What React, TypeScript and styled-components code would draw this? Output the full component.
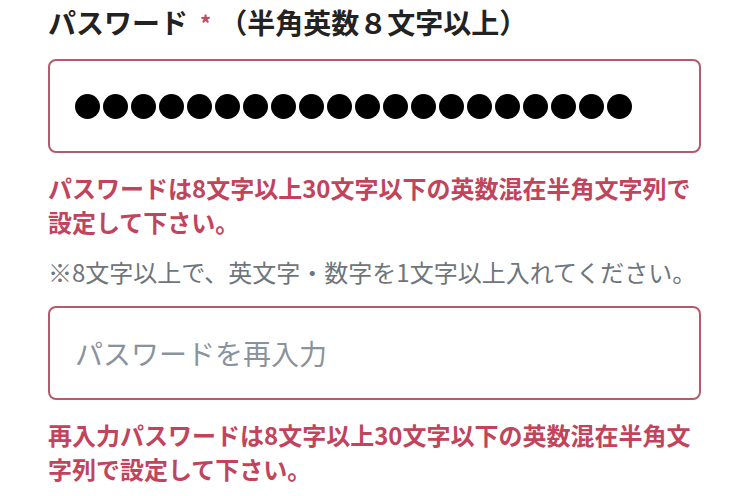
import styled, { createGlobalStyle } from "styled-components";

const GlobalStyle = createGlobalStyle`
  html, body {
    margin: 0;
    padding: 0;
    background: #ffffff;
  }
  body {
    font-family: "Noto Sans CJK JP", "Noto Sans", sans-serif;
  }
`;

function App() {
  return (
    <>
      <GlobalStyle />
      <Form>
        <Label>
          パスワード<Required>*</Required>
          <Note>（半角英数８文字以上）</Note>
        </Label>
        <InputBox>
          <Masked aria-label="パスワード">
            {Array.from({ length: 20 }).map((_, i) => (
              <Dot key={i} />
            ))}
          </Masked>
        </InputBox>
        <ErrorText>
          パスワードは8文字以上30文字以下の英数混在半角文字列で設定して下さい。
        </ErrorText>
        <Hint>※8文字以上で、英文字・数字を1文字以上入れてください。</Hint>
        <InputBox>
          <TextInput type="password" placeholder="パスワードを再入力" />
        </InputBox>
        <ErrorText>
          再入力パスワードは8文字以上30文字以下の英数混在半角文字列で設定して下さい。
        </ErrorText>
      </Form>
    </>
  );
}

export default App;

const Form = styled.div`
  display: flex;
  flex-direction: column;
  width: 653px;
  padding-left: 48px;
`;

const Label = styled.div`
  display: flex;
  align-items: center;
  padding-top: 1px;
  height: 41px;
  font-size: 28px;
  font-weight: 700;
  color: #222222;
  white-space: nowrap;
`;

const Required = styled.span`
  margin-left: 12px;
  font-size: 22px;
  color: #c8485f;
  align-self: flex-start;
  padding-top: 5px;
`;

const Note = styled.span`
  margin-left: 8px;
`;

const InputBox = styled.div`
  display: flex;
  align-items: center;
  box-sizing: border-box;
  height: 94px;
  margin-top: 17px;
  padding: 0 25px;
  border: 2px solid #b35b6b;
  border-radius: 8px;
  background: #ffffff;
`;

const Masked = styled.div`
  display: flex;
  gap: 3px;
`;

const Dot = styled.span`
  display: block;
  width: 25px;
  height: 25px;
  border-radius: 50%;
  background: #000000;
`;

const TextInput = styled.input`
  width: 100%;
  border: none;
  outline: none;
  padding: 0;
  background: transparent;
  font-family: "Noto Sans CJK JP", "Noto Sans", sans-serif;
  font-size: 28px;
  color: #222222;

  &::placeholder {
    color: #8a939b;
  }
`;

const ErrorText = styled.p`
  margin: 18px 0 0;
  font-size: 24px;
  line-height: 34px;
  font-weight: 700;
  color: #c2445c;
`;

const Hint = styled.p`
  margin: 16px 0 0;
  font-size: 24px;
  line-height: 34px;
  color: #6e757b;
`;
